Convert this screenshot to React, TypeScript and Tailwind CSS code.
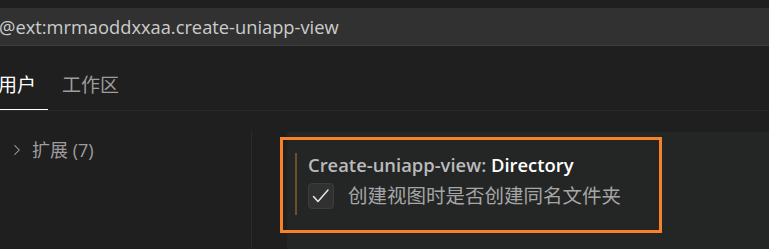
import { ChevronRight } from "lucide-react";

const font = { fontFamily: '"Open Sans", "Noto Sans CJK SC", sans-serif' };

export default function App() {
  return (
    <div
      className="relative w-[769px] h-[249px] overflow-hidden bg-[#1f1f1f] pt-[8px] [font-family:'Open_Sans','Noto_Sans_CJK_SC',sans-serif]"
      style={font}
    >
      {/* search */}
      <div className="h-[38px] bg-[#313131] border-b border-[#3c3c3c] flex items-center -ml-[1px] text-[18.3px] text-[#cccccc] whitespace-nowrap">
        @ext:mrmaoddxxaa.create-uniapp-view
      </div>

      {/* tabs */}
      <div className="h-[65px] border-b border-[#2b2b2b] flex items-end">
        <div className="w-[50px] h-[40px] border-b border-white flex items-start -ml-[2px] pt-[1px] text-[19px] text-white">
          用户
        </div>
        <div className="h-[40px] ml-[14px] pt-[1px] flex items-start text-[19px] text-[#9d9d9d]">工作区</div>
      </div>

      {/* body */}
      <div className="flex mt-[21px] h-[200px]">
        <div className="w-[252px] shrink-0 border-r border-[#2b2b2b] pt-[6px]">
          <div className="flex items-center h-[24px] pl-[8px] text-[18px] text-[#9d9d9d]">
            <ChevronRight size={18} strokeWidth={1.4} className="text-[#aaaaaa]" />
            <span className="ml-[6px]">扩展 (7)</span>
          </div>
        </div>
        <div className="ml-[35px] flex-1 bg-[#242525] pt-[21px] pl-[8px]">
          <div className="flex">
            <div className="w-[2px] h-[62px] bg-[#6b5024]" />
            <div className="ml-[11px] -mt-[2px]">
              <div className="text-[18.4px] font-semibold text-[#bbbbbb] leading-[28px]">
                Create-uniapp-view: <span className="text-white">Directory</span>
              </div>
              <div className="flex items-center mt-[4px]">
                <div className="w-[26px] h-[26px] rounded-[4px] bg-[#313131] border border-[#3c3c3c] flex items-center justify-center">
                  <svg width="20" height="20" viewBox="0 0 20 20" fill="none">
                    <polyline points="2.5,10.5 7,15.5 17,4" stroke="#e8e8e8" strokeWidth="1.5" strokeLinecap="round" strokeLinejoin="round" />
                  </svg>
                </div>
                <span className="ml-[14px] text-[19.5px] text-[#a6a6a6] leading-[26px]">创建视图时是否创建同名文件夹</span>
              </div>
            </div>
          </div>
        </div>
      </div>

      {/* annotation box */}
      <div className="absolute left-[280px] top-[137px] w-[382px] h-[96px] border-[3px] border-[#f7822a]" />
    </div>
  );
}
